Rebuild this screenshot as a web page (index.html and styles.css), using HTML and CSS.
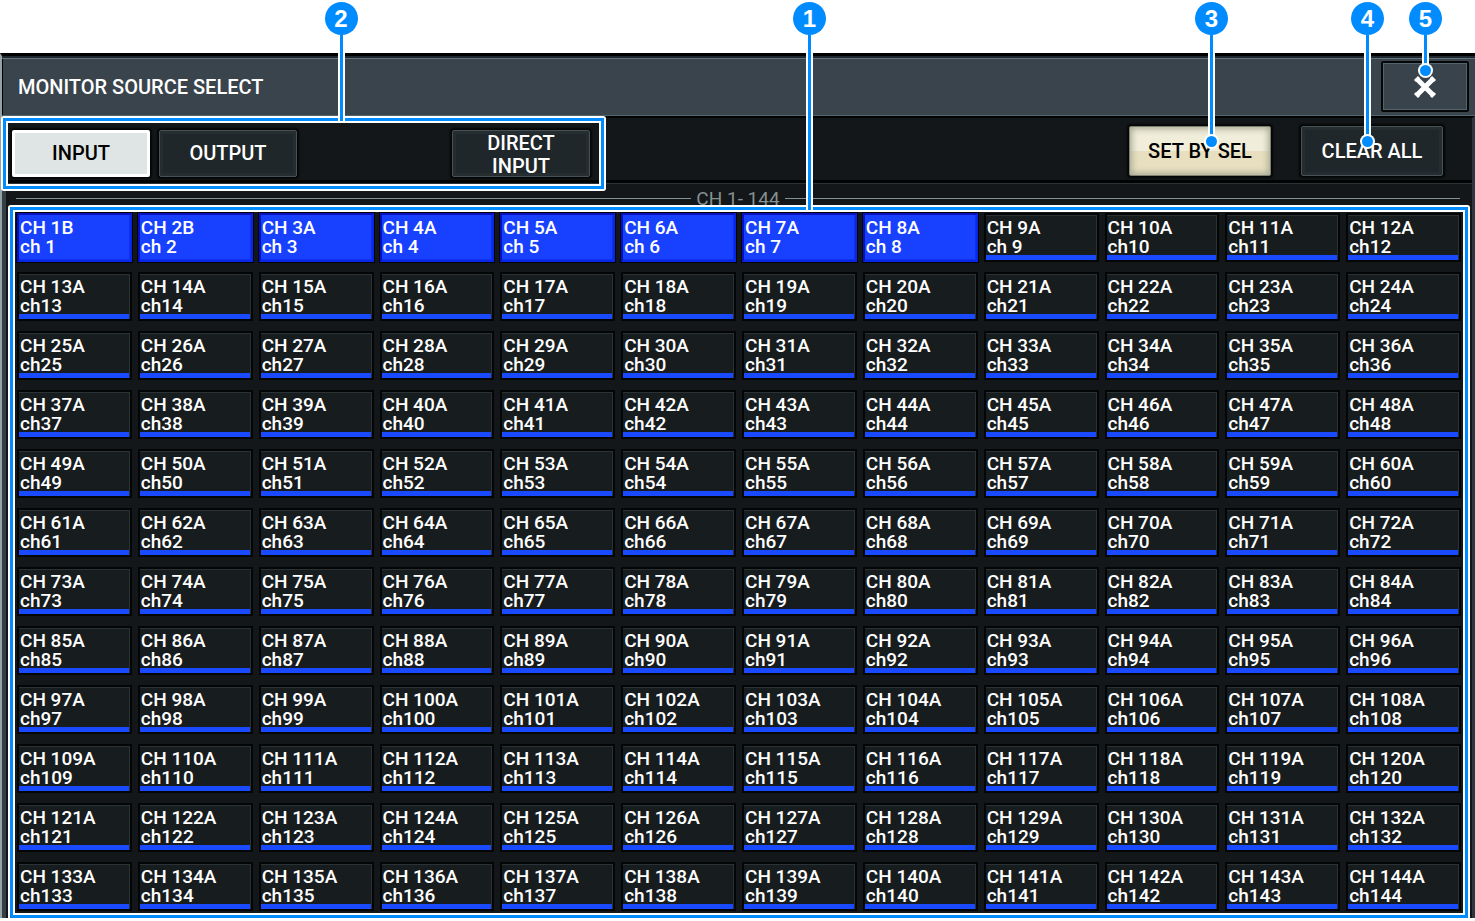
FILE: index.html
```html
<!DOCTYPE html>
<html lang="en">
<head>
  <meta charset="UTF-8" />
  <meta name="viewport" content="width=device-width, initial-scale=1.0"/>
  <title>MONITOR SOURCE SELECT</title>
  <link rel="stylesheet" href="styles.css">
</head>

<body>
  <main class="screen">
    <!-- Title bar -->
    <header class="title-bar">
      <h1>MONITOR SOURCE SELECT</h1>
      <div class="anchor">
        <button type="button" class="close" aria-label="Close">
          <svg viewBox="0 0 24 24" width="24" height="24" aria-hidden="true">
            <path d="M4.500 4.500L19.500 19.500M19.500 4.500L4.500 19.500" stroke="#fff" stroke-width="5"/>
            <path d="M2 6L6 2M18 2L22 6M2 18L6 22M18 22L22 18" stroke="#fff" stroke-width="3"/>
          </svg>
        </button>
        <div class="pin pin-5"><span class="number">5</span><span class="line"></span><span class="dot"></span></div>
      </div>
    </header>

    <div class="panel">
      <!-- Source tabs and actions -->
      <div class="toolbar">
        <div class="tabs">
          <button type="button" class="btn active" aria-pressed="true">INPUT</button>
          <button type="button" class="btn" aria-pressed="false">OUTPUT</button>
          <button type="button" class="btn direct" aria-pressed="false">DIRECT<br>INPUT</button>
          <div class="frame tabs-frame">
            <div class="pin pin-2"><span class="number">2</span><span class="line"></span></div>
          </div>
        </div>
        <div class="actions">
          <div class="anchor">
            <button type="button" class="btn action lit" aria-pressed="true">SET BY SEL</button>
            <div class="pin pin-3"><span class="number">3</span><span class="line"></span><span class="dot"></span></div>
          </div>
          <div class="anchor">
            <button type="button" class="btn action">CLEAR ALL</button>
            <div class="pin pin-4"><span class="number">4</span><span class="line"></span><span class="dot"></span></div>
          </div>
        </div>
      </div>

      <!-- Channel selection -->
      <h2 class="range">CH 1- 144</h2>
      <div class="frame channels-frame">
        <div class="channels" id="channels"></div>
        <div class="pin pin-1"><span class="number">1</span><span class="line"></span></div>
      </div>
    </div>
  </main>

  <script>
    // Channels 1 and 2 use the B input, the others use A
    const channels = document.getElementById('channels');
    for (let i = 1; i <= 144; i++) {
      const selected = i <= 8;
      const button = document.createElement('button');
      button.type = 'button';
      button.className = selected ? 'channel selected' : 'channel';
      button.setAttribute('aria-pressed', selected);
      button.innerHTML = `<span>CH ${i}${i <= 2 ? 'B' : 'A'}</span><span>ch${String(i).padStart(2)}</span>`;
      channels.appendChild(button);
    }
  </script>
</body>
</html>
```
FILE: styles.css
```css
* {
  box-sizing: border-box;
}

body {
  min-height: 100vh;
  margin: 0;
  padding-top: 53px;
  background: #fff;
  font-family: Roboto, "Liberation Sans", sans-serif;
  font-size: 19px;
  font-weight: 500;
}

button {
  font: inherit;
  color: inherit;
  padding: 0;
  cursor: pointer;
}

.screen {
  border-top: 3px solid #000;
  border-left: 2px solid #93a3a6;
  color: #fff;
  background: #131719;
}

/* Title bar */
.title-bar {
  display: flex;
  align-items: center;
  justify-content: space-between;
  height: 60px;
  padding: 0 6px 0 16px;
  border-top: 2px solid #1f282e;
  border-bottom: 1px solid #52646c;
  background: #39444c;
  box-shadow: inset 0 1px #61747b, inset 1px 0 #000;
}

.title-bar h1 {
  margin: 0;
  font-size: 20px;
  font-weight: 500;
}

.close {
  display: flex;
  align-items: center;
  justify-content: center;
  width: 88px;
  height: 51px;
  border: 2px solid #050708;
  border-radius: 2px;
  background: #38434b;
  box-shadow: inset 0 0 0 1px #53636c;
}

.panel {
  border-top: 2px solid #020303;
  border-left: 4px solid #353f46;
  border-right: 3px solid #2c363d;
}

/* Toolbar */
.toolbar {
  display: flex;
  align-items: center;
  justify-content: space-between;
  height: 65px;
  padding: 0 29px 0 6px;
  border-bottom: 3px solid #020303;
  box-shadow: 0 1px #2b3134;
}

.tabs {
  position: relative;
  display: flex;
  gap: 9px;
  margin-top: 8px;
}

.actions {
  display: flex;
  gap: 30px;
  margin-top: 4px;
}

.btn {
  width: 138px;
  height: 47px;
  padding-top: 1px;
  font-size: 20px;
  line-height: 23px;
  border: 1px solid #475257;
  border-radius: 2px;
  background: #20272a;
  box-shadow: inset 0 0 0 3px #252d30, 0 0 2px 2px #050607;
}

.btn.active {
  color: #000;
  border: 3px solid #fff;
  background: #dfe5e4;
  box-shadow: 0 0 2px 2px #050607;
}

.btn.direct {
  margin-left: 146px;
}

.btn.action {
  width: 142px;
  height: 50px;
  display: block;
}

.btn.lit {
  color: #000;
  border-color: #7e806f;
  background: linear-gradient(#f1eddb 50%, #e7dfbf 50%);
  box-shadow: inset 0 0 6px 2px #a9aa94, 0 0 2px 2px #050607;
}

/* Channel range heading */
.range {
  display: flex;
  align-items: center;
  gap: 5px;
  height: 24px;
  margin: 3px 12px 0 10px;
  color: #85918f;
  font-size: 19px;
  font-weight: 400;
}

.range::before,
.range::after {
  content: "";
  flex: 1;
  height: 1px;
  background: #85918f;
}

/* Channel grid */
.channels {
  display: grid;
  grid-template-columns: repeat(12, 1fr);
  gap: 10px 6px;
}

.channel {
  display: flex;
  flex-direction: column;
  align-items: flex-start;
  justify-content: flex-start;
  height: 49px;
  padding: 3px 0 0 1px;
  line-height: 19px;
  white-space: nowrap;
  border: 2px solid #040505;
  background: linear-gradient(#1a4aff, #1a4aff) bottom / 100% 5px no-repeat #171c1e;
  box-shadow: inset -1px 1px #2b3235;
}

.channel.selected {
  background: #1740ff;
  border-color: #0a12c0 #0828e8 #0828e8 #0510c4;
  box-shadow: inset -1px -1px #1030ee, 0 0 0 1px #020308;
}

/* Callouts */
.frame {
  border: 3px solid #008cff;
  border-radius: 1px;
  box-shadow: 0 0 0 2px #fff, inset 0 0 0 2px #fff;
}

.tabs-frame {
  position: absolute;
  inset: -12px -14px -12px -9px;
  pointer-events: none;
}

.channels-frame {
  position: relative;
  margin: -3px 4px -1px;
  padding: 3px 4px 4px;
}

.anchor {
  position: relative;
}

.pin {
  position: absolute;
  display: flex;
  flex-direction: column;
  align-items: center;
  width: 33px;
  margin-left: -16px;
  pointer-events: none;
  z-index: 1;
}

.number {
  flex: none;
  width: 33px;
  height: 33px;
  border-radius: 50%;
  background: #008cff;
  color: #fff;
  font: bold 24px/33px "Liberation Sans", sans-serif;
  text-align: center;
}

.line {
  flex: 1;
  width: 3px;
  background: #008cff;
  box-shadow: -2px 0 #fff, 2px 0 #fff;
}

.dot {
  position: relative;
  flex: none;
  width: 11px;
  height: 11px;
  margin-top: -2px;
  border-radius: 50%;
  background: #008cff;
  box-shadow: 0 0 0 2px #fff;
}

.pin-1 {
  left: calc(50% + 70px);
  bottom: 100%;
  height: 208px;
}

.pin-2 {
  left: calc(50% + 37px);
  bottom: 100%;
  height: 119px;
}

.pin-3 {
  left: calc(50% + 11px);
  bottom: 29px;
  height: 145px;
}

.pin-4 {
  left: calc(50% - 5px);
  bottom: 29px;
  height: 145px;
}

.pin-5 {
  left: 50%;
  bottom: 36px;
  height: 74px;
}
```
